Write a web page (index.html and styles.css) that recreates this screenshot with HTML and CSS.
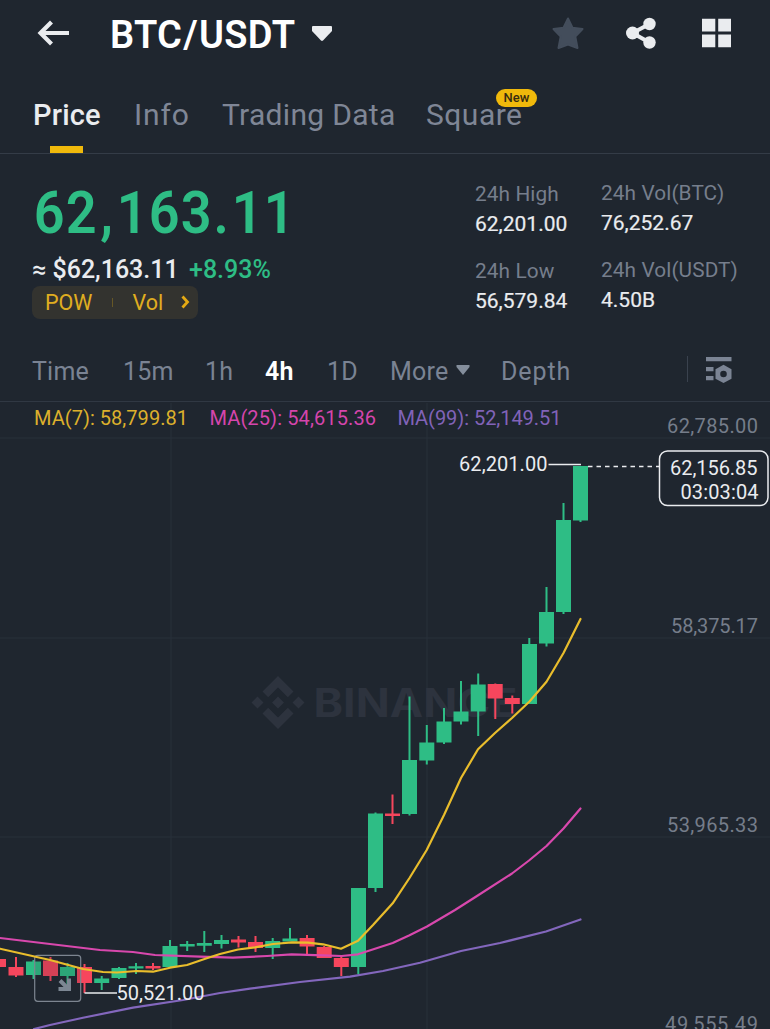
FILE: index.html
```html
<!DOCTYPE html>
<html lang="en">
<head>
<meta charset="utf-8">
<title>BTC/USDT</title>
<link rel="stylesheet" href="styles.css">
</head>
<body>
<main class="app">
  <header class="topbar">
    <svg class="back" width="32" height="26" viewBox="0 0 32 26"><path d="M14.500 2 3.500 13l11 11M4 13h28" fill="none" stroke="#eaecef" stroke-width="4.200"/></svg>
    <h1 class="pair">BTC<span class="slash">/</span>USDT</h1>
    <svg class="caret" width="20" height="15" viewBox="0 0 20 15"><path d="M1 0h18a1 1 0 0 1 1 1v4l-9 9.500q-1 .8-2 0L0 5V1a1 1 0 0 1 1-1z" fill="#eaecef"/></svg>
    <div class="actions">
      <svg width="32" height="34" viewBox="0 0 32 34"><path d="m16 2.500 4.500 9.300 10 1.200-7.200 7.500 2.200 11.500-9.500-3.500-9.500 3.500 2.200-11.500L1.500 13l10-1.200z" fill="#434d5b" stroke="#434d5b" stroke-width="2" stroke-linejoin="round"/></svg>
      <svg width="30" height="34" viewBox="0 0 30 34"><path d="M23.500 8 6.500 17l17 9.500" fill="none" stroke="#eaecef" stroke-width="4"/><g fill="#eaecef"><circle cx="23.500" cy="8" r="6.200"/><circle cx="6.500" cy="17" r="6.500"/><circle cx="23.500" cy="26.500" r="6.200"/></g></svg>
      <svg width="30" height="30" viewBox="0 0 30 30"><path d="M0 .7h13.300v12.800H0zM16.200.7H29v12.800H16.200zM0 16.500h13.300v12.800H0zM16.200 16.500H29v12.800H16.200z" fill="#eaecef"/></svg>
    </div>
  </header>

  <nav class="tabs">
    <a class="tab tab-active">Price</a>
    <a class="tab tab-info">Info</a>
    <a class="tab tab-data">Trading Data</a>
    <a class="tab tab-square">Square<span class="badge">New</span></a>
  </nav>

  <section class="summary">
    <div class="quote">
      <div class="last">62<span class="comma">,</span>163<span class="point">.</span>11</div>
      <div class="fiat"><span class="approx">≈ $62,163.11</span><span class="change">+8.93%</span></div>
      <div class="tags"><span>POW</span><i class="tag-rule"></i><span>Vol</span>
        <svg width="9" height="14" viewBox="0 0 9 14"><path d="m1.500 1.500 5 5.500-5 5.500" fill="none" stroke="#e5aa13" stroke-width="2.800"/></svg>
      </div>
    </div>
    <dl class="stats">
      <div><dt>24h High</dt><dd>62,201.00</dd></div>
      <div class="raised"><dt>24h Vol(BTC)</dt><dd>76,252.67</dd></div>
      <div><dt>24h Low</dt><dd>56,579.84</dd></div>
      <div class="raised"><dt>24h Vol(USDT)</dt><dd>4.50B</dd></div>
    </dl>
  </section>

  <nav class="intervals">
    <span class="iv iv-time">Time</span>
    <span class="iv iv-15m">15m</span>
    <span class="iv iv-1h">1h</span>
    <span class="iv iv-4h">4h</span>
    <span class="iv iv-1d">1D</span>
    <span class="iv iv-more">More <svg width="14" height="12" viewBox="0 0 14 12"><path d="M.5 1h13v2L7 11 .5 3z" fill="#848e9c"/></svg></span>
    <span class="iv iv-depth">Depth</span>
    <i class="iv-rule"></i>
    <svg class="settings" width="28" height="28" viewBox="0 0 28 28"><g fill="#7b8494"><path d="M1 2h25.500v4.300H1zM1 12h7.500v4.200H1zM1 21h7.500v4.200H1z"/><path fill-rule="evenodd" d="m18.500 9.800 8 4.500v9.400l-8 4.300-8-4.300v-9.400zm0 5.900a3.300 3.300 0 1 0 0 6.600 3.300 3.300 0 0 0 0-6.600z"/></g></svg>
  </nav>

  <svg class="chart" width="770" height="627" viewBox="0 402 770 627">
    <path class="grid" d="M0 438h770M0 638h770M0 837h770M171 403v626M427 403v626"/>
    <g class="watermark">
      <path d="m278 676 15.500 15.500-5.700 5.700-9.800-9.700-9.800 9.700-5.700-5.700zM278 729l15.500-15.500-5.700-5.700-9.800 9.700-9.800-9.700-5.700 5.700zM278 696.500l6 6-6 6-6-6zM257.500 696.500l6 6-6 6-6-6zM298.500 696.500l6 6-6 6-6-6z"/>
      <text x="313.500" y="717" textLength="204" lengthAdjust="spacingAndGlyphs">BINANCE</text>
    </g>
    <g class="down">
      <path class="wick" d="M512.300 695.500V713.500M495.300 683.500V719M392.500 794.500V824M341.300 955V976M324.200 946V958M307 935V954M255.500 936V952M238.500 936V947.500M153 963V970M84.500 964V993M50.500 957V981M16 957V977"/>
      <path class="body" d="M504.800 698h15v6h-15zM487.700 684h15v14.500h-15zM385 813.500h15v2.500h-15zM333.800 958h15v9h-15zM316.700 947h15v11h-15zM299.600 938h15v8.500h-15zM248 942h15v6h-15zM231 939.500h15v3h-15zM145.500 966h15v2.500h-15zM77 967h15v16h-15zM43 960.500h15v15.500h-15zM8.500 967h15v8.500h-15zM-9 959h15v8h-15z"/>
    </g>
    <g class="up">
      <path class="wick" d="M580.500 466V522M563.500 503V614M546.500 587V646.500M529.300 638V704M478.200 673.500V736M461 681V724.500M444 708V744M426.800 725V764.500M409.500 696.500V815.500M375.500 812.500V892M358.300 888V974M290 928V941M272.700 938V959M221.500 935V948.500M204.300 931V952M187.200 941V951M170 940V968M136 963V974M119 967V979M101.700 976V990M67.500 963V988M33.500 960V979"/>
      <path class="body" d="M573 466h15v54.500h-15zM556 520h15v92h-15zM539 612h15v31.500h-15zM522 644h15v60h-15zM470.700 684.500h15v27h-15zM453.500 711.500h15v10h-15zM436.500 721.500h15v21h-15zM419.300 742.500h15v18h-15zM402 760h15v54h-15zM368 813.500h15v74.500h-15zM351 888h15v79h-15zM282.500 938.500h15v3h-15zM265.200 941h15v7h-15zM214 940h15v4h-15zM196.800 943h15v2.700h-15zM179.700 944h15v2.500h-15zM162.500 946h15v21h-15zM128.500 966.300h15v2.300h-15zM111.500 968h15v10h-15zM94.200 978.500h15v4.500h-15zM60 967h15v9h-15zM26 961.500h15v13.500h-15z"/>
    </g>
    <g class="expand"><rect x="34.700" y="955.300" width="46" height="46" rx="3"/><path d="m60 980.500 7 7m2-9v10.500H58.500" /></g>
    <path class="ma99" d="M34 1029 50 1025 83 1017.700 133 1007.700 183 1000 220 993 250 988.700 300 982 350 976.700 383 971 420 962.700 461 951 500 943 546 931.500 580.500 919.500"/>
    <path class="ma25" d="M0 938 50 944 100 950 133 952 155 955 200 956.700 233 957.700 267 956 291.600 954.300 323 955.300 341.700 956 358 954.300 392.700 943 409 935.500 427 926.500 455 910 477 896 512 873.500 529 860.500 546.500 846 563.500 828.500 580.500 808.500"/>
    <path class="ma7" d="M0 948.700 50 960 83 969 103 972 117 972.500 136.500 971 153 971.700 170 967.700 187 965 206 958.500 220 954 238 949.500 255 947.300 273 944 292 942.300 308 942.700 323 944.300 341 948.700 358 940.700 373 925 392.700 903.300 409.500 878 426.700 850 444 815 461 778 478 749.300 495 733 512 718 529.500 701.500 546.500 681.700 563.500 653 580.500 619"/>
    <g class="ma-labels">
      <text class="c7" x="34" y="425" textLength="154">MA(7): 58,799.81</text>
      <text class="c25" x="209.500" y="425" textLength="166.500">MA(25): 54,615.36</text>
      <text class="c99" x="397.500" y="425" textLength="164">MA(99): 52,149.51</text>
    </g>
    <g class="axis">
      <text x="667" y="433" textLength="91">62,785.00</text>
      <text x="671" y="632.500" textLength="87">58,375.17</text>
      <text x="667" y="832" textLength="91">53,965.33</text>
      <text x="665" y="1031" textLength="93">49,555.49</text>
    </g>
    <g class="extremes">
      <text x="459" y="471" textLength="88.500">62,201.00</text>
      <path d="M548.500 464.500H581"/>
      <text x="116.500" y="999.500" textLength="88">50,521.00</text>
      <path d="M84.500 993H117"/>
      <path d="M588 466.500H659" stroke-dasharray="4.500 4"/>
      <rect x="659.500" y="451" width="108.500" height="54.500" rx="8"/>
      <text x="670" y="475" textLength="87.500">62,156.85</text>
      <text x="680.500" y="498.500" textLength="78">03:03:04</text>
    </g>
  </svg>
</main>
</body>
</html>
```

FILE: styles.css
```css
* { box-sizing: border-box; margin: 0; padding: 0; }

body {
  width: 770px;
  height: 1029px;
  overflow: hidden;
  background: #1f262f;
  color: #eaecef;
  font-family: Roboto, "Liberation Sans", sans-serif;
}

svg { display: block; flex: none; }
.app { display: flex; flex-direction: column; height: 1029px; }

.topbar { display: flex; align-items: center; height: 67px; padding: 0 38px 0 37px; }
.pair { width: 188px; margin-left: 41px; font-size: 38px; font-weight: 600; line-height: 44px; letter-spacing: 0.3px; white-space: nowrap; color: #fff; padding-top: 3px; }
.slash { margin: 0 1px; }
.caret { margin-left: 14px; }
.actions { display: flex; align-items: center; gap: 43px; margin-left: auto; }
.actions svg:nth-child(1) { margin-left: -1px; }
.actions svg:nth-child(2) { margin: 0 3px 0 -1px; }

.tabs { display: flex; height: 87px; padding: 29px 0 0 33px; border-bottom: 1px solid #343c47; font-size: 30px; line-height: 38px; color: #7f8696; }
.tab { position: relative; white-space: nowrap; height: 57px; }
.tab-active { width: 101px; font-size: 29px; letter-spacing: 0.2px; font-weight: 500; color: #eaecef; }
.tab-active::after { content: ""; display: block; width: 33px; height: 7px; margin: 12px 0 0 17px; background: #f0b90b; }
.tab-info { width: 88px; letter-spacing: 0.9px; }
.tab-data { width: 204px; letter-spacing: 0.3px; }
.tab-square { letter-spacing: 0.5px; }
.badge { position: absolute; left: 70px; top: -7px; width: 41px; height: 18px; border-radius: 9px; background: #f0b90b; color: #382c10; font-size: 13px; font-weight: 500; line-height: 18px; letter-spacing: 0; text-align: center; }

.summary { display: flex; height: 188px; padding-left: 32px; }
.quote { width: 443px; padding-top: 26px; }
.last { height: 68px; padding-left: 2px; font-size: 60px; font-weight: 600; line-height: 66px; letter-spacing: 1.2px; white-space: nowrap; color: #2ebd85; transform: scaleX(0.9); transform-origin: 0 0; }
.comma { margin: 0 3px 0 3px; }
.point { margin: 0 2px 0 1px; }
.fiat { display: flex; height: 38px; padding-top: 6px; font-size: 25px; font-weight: 500; line-height: 31px; }
.approx { width: 157px; white-space: nowrap; }
.change { color: #2ebd85; }
.tags { display: flex; align-items: center; width: 166px; height: 33px; padding-left: 13px; border-radius: 8px; background: #33332f; color: #e0ae20; font-size: 21.500px; }
.tag-rule { width: 1px; height: 9px; margin: 0 19px 0 20px; background: #665726; }
.tags svg { margin-left: auto; margin-right: 8px; }

.stats { display: grid; grid-template-columns: 126px 165px; grid-auto-rows: 77px; padding-top: 25px; white-space: nowrap; }
.stats dt { font-size: 20.800px; line-height: 30px; letter-spacing: 0.1px; color: #767e8c; }
.stats dd { font-size: 21px; line-height: 30px; color: #eaecef; -webkit-text-stroke: 0.2px #eaecef; }
.raised { margin-top: -0.5px; }

.intervals { display: flex; align-items: center; height: 61px; padding: 0 0 0 32px; border-bottom: 1px solid #303843; color: #7a8393; font-size: 25px; line-height: 30px; letter-spacing: 0.2px; white-space: nowrap; }
.iv { display: flex; align-items: center; padding-top: 1px; }
.iv-time { width: 91px; }
.iv-15m { width: 82px; }
.iv-1h { width: 60px; }
.iv-4h { width: 62px; color: #fff; font-weight: 600; }
.iv-1d { width: 63px; }
.iv-more { width: 111px; gap: 8px; }
.iv-more svg { margin-top: -4px; }
.iv-depth { width: 186px; letter-spacing: 0.9px; }
.iv-rule { width: 1px; height: 26px; margin-top: -4px; background: #3a424e; }
.settings { margin: -4px 0 0 17px; }

.chart text { font-size: 20px; }
.grid { stroke: #28303a; stroke-width: 1; }
.watermark { fill: #2d333e; }
.chart .watermark text { font-family: Inter, sans-serif; font-size: 39px; font-weight: 700; }
.wick { fill: none; stroke-width: 2; }
.up { fill: #2ebd85; }
.up .wick { stroke: #2ebd85; }
.down { fill: #f6465d; }
.down .wick { stroke: #f6465d; }
.expand rect { fill: rgba(31, 38, 47, 0.15); stroke: #7d8590; stroke-width: 1.2; }
.expand path { fill: none; stroke: #7d8793; stroke-width: 4; }
.ma7, .ma25, .ma99 { fill: none; stroke-width: 2.2; stroke-linejoin: round; stroke-linecap: round; }
.ma7 { stroke: #e9bd2c; }
.ma25 { stroke: #d848ad; }
.ma99 { stroke: #8367bd; }
.c7 { fill: #dcb02c; }
.c25 { fill: #d545ac; }
.c99 { fill: #8163b8; }
.axis { fill: #757d8a; }
.extremes text { fill: #eaecef; }
.extremes path, .extremes rect { fill: none; stroke: #eaecef; stroke-width: 1.5; }
.extremes rect { fill: #1f262f; }
```
